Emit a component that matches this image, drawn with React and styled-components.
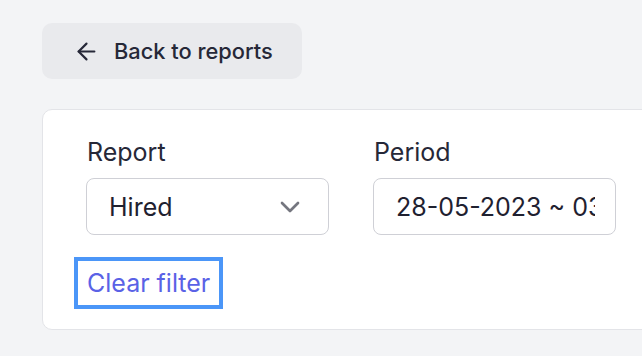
import React from 'react';
import styled, { createGlobalStyle } from 'styled-components';
import { ArrowLeft, ChevronDown } from 'lucide-react';

const GlobalStyle = createGlobalStyle`
  html, body {
    margin: 0;
    padding: 0;
    background: #f3f4f6;
    font-family: Inter, "Noto Sans", sans-serif;
    color: #1f2130;
    overflow: hidden;
  }
`;

const Page = styled.div`
  display: flex;
  flex-direction: column;
  align-items: flex-start;
  padding: 23px 0 0 42px;
  gap: 30px;
  width: 642px;
  box-sizing: border-box;
  overflow: hidden;
`;

const BackButton = styled.button`
  display: flex;
  align-items: center;
  gap: 14px;
  height: 56px;
  padding: 0 29px 0 31px;
  border: none;
  border-radius: 10px;
  background: #e9eaed;
  color: #262838;
  font-family: inherit;
  font-size: 21.8px;
  font-weight: 500;
  cursor: pointer;
`;

const Card = styled.div`
  width: 640px;
  flex-shrink: 0;
  box-sizing: border-box;
  background: #fff;
  border: 1px solid #e3e4e8;
  border-radius: 10px;
  padding: 27px 43px 20px 43px;
  display: flex;
  flex-direction: column;
  gap: 22px;
`;

const Row = styled.div`
  display: flex;
  gap: 44px;
`;

const Field = styled.div`
  display: flex;
  flex-direction: column;
  gap: 11px;
`;

const Label = styled.label`
  font-size: 25px;
  line-height: 30px;
  color: #262838;
  padding-left: 1px;
`;

const Box = styled.div`
  width: 243px;
  height: 57px;
  box-sizing: border-box;
  border: 1px solid #cfd0d6;
  border-radius: 8px;
  display: flex;
  align-items: center;
  justify-content: space-between;
  padding: 0 ${p => p.$right}px 0 22px;
  font-size: 25px;
  color: #1f2130;
  overflow: hidden;
  white-space: nowrap;
`;

const Clip = styled.span`
  display: block;
  width: 200px;
  overflow: hidden;
`;

const ClearLink = styled.a`
  align-self: flex-start;
  margin-left: -12px;
  padding: 7px 9px;
  line-height: 30px;
  border: 4px solid #4b96f8;
  font-size: 25px;
  color: #5a62e6;
  text-decoration: none;
  cursor: pointer;
`;

export default function App() {
  return (
    <>
      <GlobalStyle />
      <Page>
        <BackButton>
          <ArrowLeft size={27} strokeWidth={1.9} />
          Back to reports
        </BackButton>
        <Card>
          <Row>
            <Field>
              <Label>Report</Label>
              <Box $right={22}>
                Hired
                <ChevronDown size={32} color="#75767f" strokeWidth={2} />
              </Box>
            </Field>
            <Field>
              <Label>Period</Label>
              <Box $right={20}>
                <Clip>28-05-2023 ~ 03-06-2023</Clip>
              </Box>
            </Field>
          </Row>
          <ClearLink>Clear filter</ClearLink>
        </Card>
      </Page>
    </>
  );
}
